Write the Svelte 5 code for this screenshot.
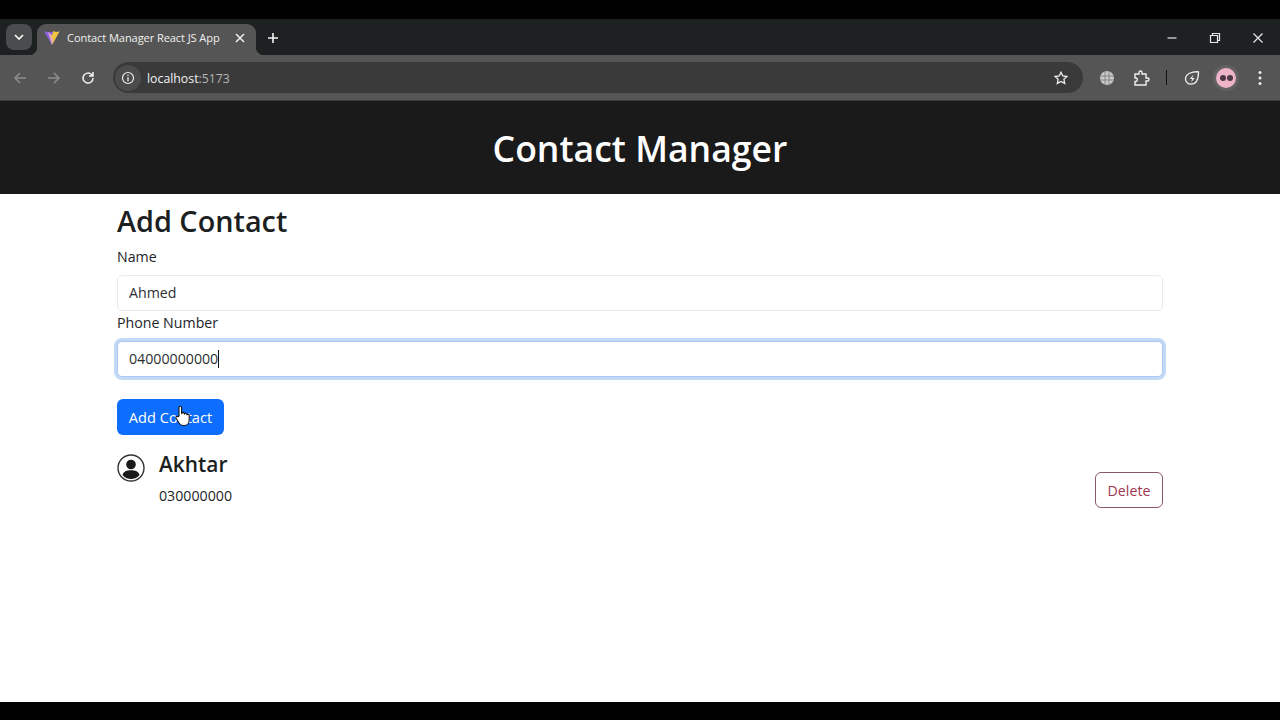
<script>
  let name = $state('Ahmed');
  let phone = $state('04000000000');
  const contacts = [{ id: 1, name: 'Akhtar', phone: '030000000' }];
</script>

<div class="screen">
  <div class="letterbox-top"></div>

  <div class="tabstrip">
    <button class="tab-search" aria-label="Search tabs">
      <svg width="10" height="6" viewBox="0 0 10 6"><path d="M1 1l4 4 4-4" fill="none" stroke="#fff" stroke-width="1.6"/></svg>
    </button>
    <div class="tab">
      <svg class="favicon" width="16" height="16" viewBox="0 0 16 16">
        <path d="M0 1.5L8 15 15.5 1.5 11 2.5 8 2 4 2z" fill="#8a63d8"/>
        <path d="M4 2l4 13 2-8z" fill="#e0a8c8"/>
        <path d="M9.5 1L7 7.5l2 1L8 15l7.5-13.5-3.5.5z" fill="#f2c53d"/>
      </svg>
      <span class="tab-title">Contact Manager React JS App</span>
      <svg class="tab-close" width="10" height="10" viewBox="0 0 10 10"><path d="M1 1l8 8M9 1l-8 8" stroke="#f0f0f0" stroke-width="1.5"/></svg>
    </div>
    <svg class="new-tab" width="12" height="12" viewBox="0 0 12 12"><path d="M6 1v10M1 6h10" stroke="#f4f4f4" stroke-width="1.6"/></svg>
    <div class="window-controls">
      <svg width="12" height="12" viewBox="0 0 12 12"><path d="M1.5 6h9" stroke="#e8e8e8" stroke-width="1.2"/></svg>
      <svg width="12" height="12" viewBox="0 0 12 12"><path d="M1.500 3.500h7v7h-7zM3.500 3.500v-2h7v7h-2" fill="none" stroke="#e8e8e8" stroke-width="1.200"/></svg>
      <svg width="12" height="12" viewBox="0 0 12 12"><path d="M1.500 1.500l9 9M10.500 1.500l-9 9" stroke="#e8e8e8" stroke-width="1.200"/></svg>
    </div>
  </div>

  <div class="toolbar">
    <div class="nav">
      <svg width="14" height="14" viewBox="0 0 14 14"><path d="M13 7H2M7 2L2 7l5 5" fill="none" stroke="#8d8d8d" stroke-width="1.5"/></svg>
      <svg width="14" height="14" viewBox="0 0 14 14"><path d="M1 7h11M7 2l5 5-5 5" fill="none" stroke="#8d8d8d" stroke-width="1.5"/></svg>
      <svg width="14" height="14" viewBox="0 0 14 14"><path d="M12 7a5 5 0 1 1-1.500-3.500L12 5M12 1v4H8" fill="none" stroke="#f2f2f2" stroke-width="1.500"/></svg>
    </div>
    <div class="omnibox">
      <span class="site-info">
        <svg width="14" height="14" viewBox="0 0 14 14"><circle cx="7" cy="7" r="5.500" fill="none" stroke="#eee" stroke-width="1.200"/><path d="M7 6.200v4M7 3.800v1.200" stroke="#eee" stroke-width="1.300"/></svg>
      </span>
      <span class="url">localhost<span class="port">:5173</span></span>
      <svg class="star" width="16" height="16" viewBox="0 0 16 16"><path d="M8 2.200l1.800 3.800 4.100.5-3 2.800.8 4.100L8 11.400l-3.700 2 .8-4.100-3-2.800 4.100-.5z" fill="none" stroke="#eee" stroke-width="1.300"/></svg>
    </div>
    <div class="actions">
      <svg class="globe" width="16" height="16" viewBox="0 0 16 16"><circle cx="8" cy="8" r="7" fill="#c8c8c8"/><path d="M1 6h14M1 10h14M6 1v14M10 1v14" stroke="#777" stroke-width=".8"/></svg>
      <svg class="puzzle" width="18" height="18" viewBox="0 0 18 18"><path d="M2 5h4V3.500a1.500 1.500 0 0 1 3 0V5h4v4h1.500a1.500 1.500 0 0 1 0 3H13v4H2v-3.500h1a1.800 1.800 0 0 0 0-3.500H2z" fill="none" stroke="#f0f0f0" stroke-width="1.400"/></svg>
      <span class="divider"></span>
      <svg class="leaf" width="16" height="16" viewBox="0 0 16 16"><path d="M14.500 1.800C8 1.500 1.500 3.500 1.500 9c0 3 2.500 5.200 5.500 5.200 5.500 0 7.500-6 7.500-12.400z" fill="none" stroke="#f0f0f0" stroke-width="1.300"/><path d="M9.500 4.500L5.800 9h2.500L7 12.500 10.800 8H8.200z" fill="#f0f0f0"/></svg>
      <span class="avatar">
        <span class="eye"></span><span class="eye"></span>
      </span>
      <svg class="dots" width="4" height="16" viewBox="0 0 4 16"><circle cx="2" cy="2.500" r="1.500" fill="#eee"/><circle cx="2" cy="8" r="1.500" fill="#eee"/><circle cx="2" cy="13.500" r="1.500" fill="#eee"/></svg>
    </div>
  </div>

  <header class="app-header">
    <h1>Contact Manager</h1>
  </header>

  <main class="content">
    <h2>Add Contact</h2>
    <form onsubmit={(e) => e.preventDefault()}>
      <label for="name">Name</label>
      <input id="name" type="text" bind:value={name} />
      <label for="phone">Phone Number</label>
      <div class="focus-wrap">
        <input id="phone" class="focused" type="text" bind:value={phone} />
        <span class="caret"></span>
      </div>
      <div class="submit-wrap">
        <button class="btn-primary" type="submit">Add Contact</button>
        <svg class="cursor" width="18" height="22" viewBox="0 0 18 22">
          <path d="M5 11V2.500a1.300 1.300 0 0 1 2.600 0V9l.4-1a1.200 1.200 0 0 1 2.200.2l.2.8.4-.4a1.200 1.200 0 0 1 2 .5l.2.7.4-.2a1.200 1.200 0 0 1 1.800 1V15c0 3-2 5.500-4.800 5.500H9c-2 0-3-1-4-2.500l-3-5c-.6-1.200 1-2.400 2-1.300z" fill="#fff" stroke="#111" stroke-width="1.100"/>
        </svg>
      </div>
    </form>

    <ul class="contacts">
      {#each contacts as contact (contact.id)}
        <li class="contact">
          <svg class="person" width="28" height="28" viewBox="0 0 28 28">
            <circle cx="14" cy="14" r="13" fill="#fff" stroke="#333" stroke-width="1.400"/>
            <circle cx="14" cy="10.500" r="4.800" fill="#1a1a1a"/>
            <path d="M5.500 21c1-3.500 4-4.800 8.500-4.800s7.500 1.300 8.500 4.800c-2 2.600-5 4-8.500 4s-6.500-1.400-8.500-4z" fill="#1a1a1a"/>
          </svg>
          <div class="contact-info">
            <h3>{contact.name}</h3>
            <p>{contact.phone}</p>
          </div>
          <button class="btn-delete">Delete</button>
        </li>
      {/each}
    </ul>
  </main>

  <div class="letterbox-bottom"></div>
</div>

<style>
  :global(body) {
    margin: 0;
    background: #000;
  }

  .screen {
    width: 1280px;
    height: 720px;
    display: flex;
    flex-direction: column;
    overflow: hidden;
    font-family: "Open Sans", "Noto Sans", sans-serif;
  }

  .letterbox-top {
    height: 19px;
    background: #000;
  }

  .letterbox-bottom {
    height: 18px;
    background: #000;
  }

  .tabstrip {
    height: 36px;
    background: #1e2122;
    display: flex;
    align-items: flex-end;
    padding-left: 6px;
  }

  .tab-search {
    width: 26px;
    height: 26px;
    margin: 0 5px 5px 0;
    padding: 0;
    border: none;
    border-radius: 8px;
    background: #4a4c4d;
    display: flex;
    align-items: center;
    justify-content: center;
  }

  .tab {
    width: 219px;
    height: 31px;
    box-sizing: border-box;
    padding: 0 11px 3px 7px;
    background: #555;
    border-radius: 9px 9px 0 0;
    display: flex;
    align-items: center;
    gap: 7px;
    position: relative;
  }

  .tab::before,
  .tab::after {
    content: "";
    position: absolute;
    bottom: 0;
    width: 8px;
    height: 8px;
  }

  .tab::before {
    left: -8px;
    background: radial-gradient(circle at 0 0, transparent 8px, #555 8.5px);
  }

  .tab::after {
    right: -8px;
    background: radial-gradient(circle at 100% 0, transparent 8px, #555 8.5px);
  }

  .favicon,
  .tab-close {
    flex: none;
  }

  .tab-title {
    flex: 1;
    font-size: 11.1px;
    line-height: 14px;
    margin-top: -1px;
    letter-spacing: -0.1px;
    color: #f0f0f0;
    white-space: nowrap;
  }

  .new-tab {
    margin: 0 0 11px 11px;
  }

  .window-controls {
    margin-left: auto;
    display: flex;
    gap: 31px;
    padding: 0 16px 11px 0;
  }

  .toolbar {
    height: 46px;
    box-sizing: border-box;
    background: #555;
    display: flex;
    align-items: center;
    border-bottom: 1px solid #3c3c3c;
  }

  .nav {
    display: flex;
    gap: 20px;
    padding-left: 13px;
    width: 113px;
    box-sizing: border-box;
  }

  .omnibox {
    width: 970px;
    height: 31px;
    border-radius: 16px;
    background: #3a3a3a;
    display: flex;
    align-items: center;
    box-sizing: border-box;
    padding-right: 14px;
  }

  .site-info {
    width: 26px;
    height: 26px;
    margin-left: 2px;
    border-radius: 50%;
    background: #4c4c4c;
    display: flex;
    align-items: center;
    justify-content: center;
  }

  .url {
    margin: 1px 0 0 6px;
    font-size: 12.3px;
    color: #f2f2f2;
  }

  .port {
    color: #b5b5b5;
  }

  .star {
    margin-left: auto;
  }

  .actions {
    flex: 1;
    display: flex;
    align-items: center;
    padding-left: 16px;
  }

  .puzzle {
    margin-left: 18px;
  }

  .divider {
    width: 1px;
    height: 15px;
    margin-left: 15px;
    background: #111;
  }

  .leaf {
    margin-left: 17px;
  }

  .avatar {
    width: 20px;
    height: 20px;
    margin-left: 16px;
    border-radius: 50%;
    background: #eeb4c8;
    display: flex;
    align-items: center;
    justify-content: center;
    gap: 1px;
    box-shadow: 0 0 0 3px #626262;
  }

  .eye {
    width: 6px;
    height: 6px;
    border-radius: 50%;
    background: #4a3a45;
  }

  .dots {
    margin-left: 22px;
  }

  .app-header {
    height: 93px;
    box-sizing: border-box;
    padding-top: 3px;
    background: #1a1a1a;
    display: flex;
    align-items: center;
    justify-content: center;
  }

  h1 {
    margin: 0;
    font-size: 35.6px;
    font-weight: 600;
    color: #fff;
    line-height: 1;
  }

  .content {
    flex: 1;
    background: #fff;
    padding: 0 117px;
    color: #212529;
  }

  h2 {
    margin: 9px 0 0;
    font-size: 28.8px;
    font-weight: 600;
    line-height: 36px;
    color: #1c1f22;
  }

  form {
    display: flex;
    flex-direction: column;
  }

  label {
    font-size: 14.2px;
    line-height: 20px;
    margin: 0 0 8px;
  }

  label[for="name"] {
    margin-top: 8px;
  }

  input {
    display: block;
    width: 100%;
    height: 36px;
    box-sizing: border-box;
    padding: 0 11px 1px;
    border: 1px solid #e9ecef;
    border-radius: 5px;
    font: inherit;
    font-size: 14.2px;
    color: #2b2f33;
    background: #fff;
    outline: none;
  }

  label[for="phone"] {
    margin: 2px 0 8px;
  }

  .focus-wrap {
    position: relative;
  }

  input.focused {
    border-color: #a9c8f0;
    box-shadow: 0 0 0 3px #c3d9f5;
  }

  .caret {
    position: absolute;
    left: 101px;
    top: 9px;
    width: 1px;
    height: 18px;
    background: #111;
  }

  .submit-wrap {
    position: relative;
    margin-top: 22px;
    align-self: flex-start;
  }

  .btn-primary {
    display: block;
    width: 107px;
    height: 36px;
    padding: 0;
    border: none;
    border-radius: 6px;
    background: #0d6efd;
    color: #fff;
    font: inherit;
    font-size: 14.6px;
  }

  .cursor {
    position: absolute;
    left: 57px;
    top: 6px;
  }

  .contacts {
    list-style: none;
    margin: 15px 0 0;
    padding: 0;
  }

  .contact {
    display: flex;
    align-items: flex-start;
  }

  .person {
    margin-top: 4px;
    flex: none;
  }

  .contact-info {
    margin-left: 14px;
    flex: 1;
  }

  h3 {
    margin: 0;
    font-size: 20.9px;
    font-weight: 600;
    line-height: 28px;
    color: #1c1f22;
  }

  p {
    margin: 8px 0 0;
    font-size: 14.2px;
    line-height: 20px;
    color: #212529;
  }

  .btn-delete {
    width: 68px;
    height: 36px;
    margin-top: 22px;
    padding: 0;
    border: 1px solid #8a5a64;
    border-radius: 6px;
    background: #fff;
    color: #a03550;
    font: inherit;
    font-size: 14.2px;
  }
</style>
